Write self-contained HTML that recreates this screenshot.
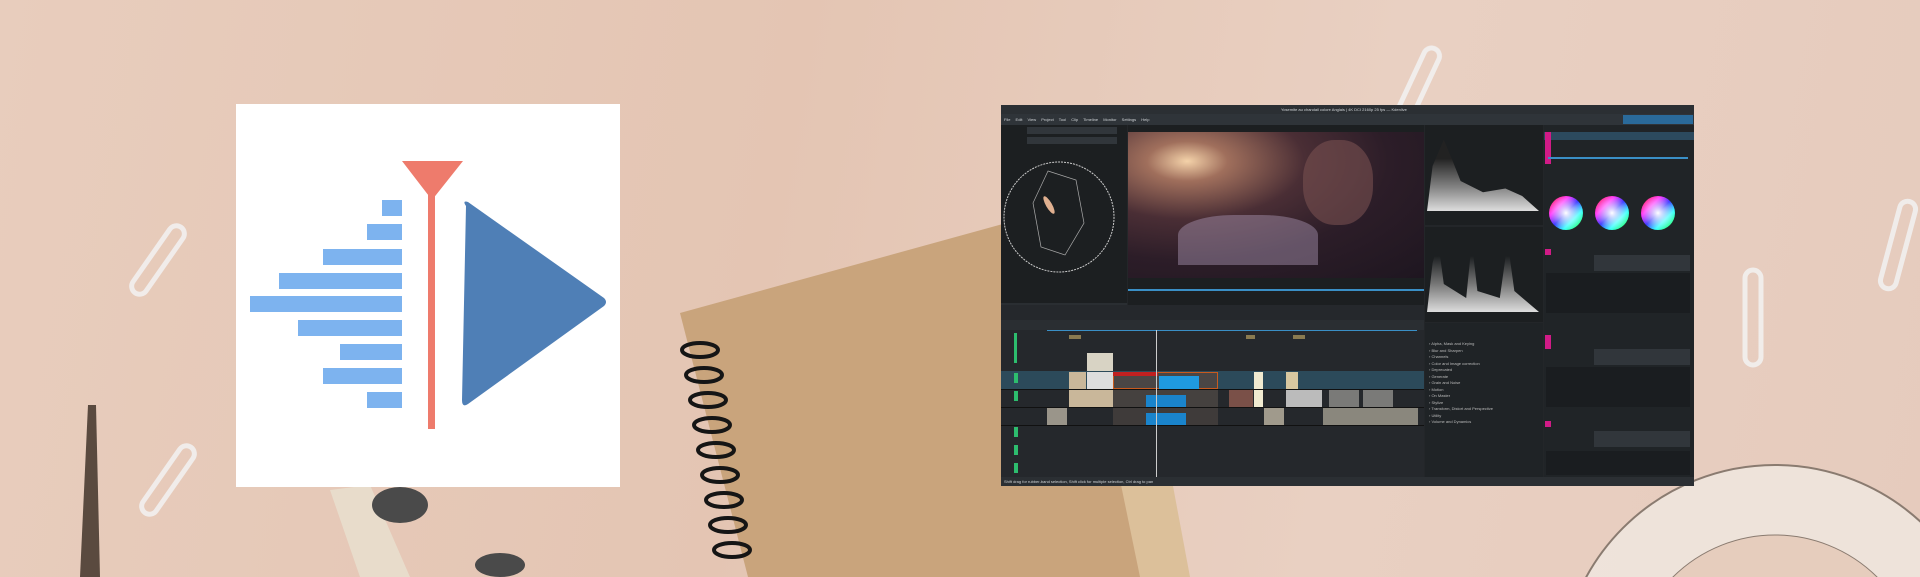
<!DOCTYPE html>
<html><head><meta charset="utf-8"><style>
*{margin:0;padding:0;box-sizing:border-box}
html,body{width:1920px;height:577px;overflow:hidden}
body{position:relative;font-family:"Liberation Sans",sans-serif;background:#e5c8b7}
.a{position:absolute}
.t{font-size:4px;color:#cfd3d6;white-space:nowrap}
</style></head><body>
<div class="a" style="left:0;top:0;width:1920px;height:577px;background:linear-gradient(100deg,#e8cdbd 0%,#e4c5b3 40%,#e9d0c2 70%,#e6cbbd 100%)"></div>
<svg class="a" style="left:0;top:0" width="1920" height="577">
<polygon points="680,313 1010,222 1160,577 748,577" fill="#c9a47c"/>
<polygon points="1120,480 1170,470 1190,577 1140,577" fill="#dcc09a"/>
<g fill="none" stroke="#151515" stroke-width="4">
<ellipse cx="700" cy="350" rx="18" ry="7"/><ellipse cx="704" cy="375" rx="18" ry="7"/><ellipse cx="708" cy="400" rx="18" ry="7"/><ellipse cx="712" cy="425" rx="18" ry="7"/><ellipse cx="716" cy="450" rx="18" ry="7"/><ellipse cx="720" cy="475" rx="18" ry="7"/><ellipse cx="724" cy="500" rx="18" ry="7"/><ellipse cx="728" cy="525" rx="18" ry="7"/><ellipse cx="732" cy="550" rx="18" ry="7"/>
</g>
<polygon points="88,405 96,405 100,577 80,577" fill="#5a4a3f"/>
<polygon points="330,490 370,485 410,577 360,577" fill="#e8dccb"/>
<ellipse cx="400" cy="505" rx="28" ry="18" fill="#4a4a4a"/>
<ellipse cx="500" cy="565" rx="25" ry="12" fill="#4a4a4a"/>
<circle cx="1775" cy="680" r="215" fill="rgba(240,232,225,.8)" stroke="#8a7b70" stroke-width="2"/>
<circle cx="1775" cy="680" r="145" fill="#e6cdbd" stroke="#8a7b70" stroke-width="1"/>
<g fill="none" stroke="#f2f2f2" stroke-width="5" opacity=".85">
<rect x="150" y="220" width="16" height="80" rx="8" transform="rotate(35 158 260)"/>
<rect x="160" y="440" width="16" height="80" rx="8" transform="rotate(35 168 480)"/>
<rect x="1410" y="45" width="16" height="80" rx="8" transform="rotate(25 1418 85)"/>
<rect x="1745" y="270" width="16" height="95" rx="8"/>
<rect x="1890" y="200" width="16" height="90" rx="8" transform="rotate(15 1898 245)"/>
</g>
</svg>
<div class="a" style="left:236px;top:104px;width:384px;height:383px;background:#fff"></div>
<svg class="a" style="left:0;top:0" width="1920" height="577">
<g fill="#7db3ef">
<rect x="382" y="200" width="20" height="16"/><rect x="367" y="224" width="35" height="16"/><rect x="323" y="249" width="79" height="16"/><rect x="279" y="273" width="123" height="16"/><rect x="250" y="296" width="152" height="16"/><rect x="298" y="320" width="104" height="16"/><rect x="340" y="344" width="62" height="16"/><rect x="323" y="368" width="79" height="16"/><rect x="367" y="392" width="35" height="16"/>
</g>
<rect x="428" y="161" width="7" height="268" fill="#ee7b6c"/>
<polygon points="402,161 463,161 432,200" fill="#ee7b6c"/>
<path d="M466,206 Q462,200 468,202 L604,298 Q608,302 604,306 L468,404 Q462,408 462,400 Z" fill="#4f7fb6"/>
</svg>
<div class="a" style="left:1001px;top:105px;width:693px;height:381px;background:#232629;overflow:hidden">
 <div class="a" style="left:0;top:0;width:693px;height:9px;background:#2b2f33"><span class="a t" style="left:280px;top:2px">Yosemite au chandail colore Anglais | 4K DCI 2160p 25 fps — Kdenlive</span></div>
 <div class="a" style="left:0;top:9px;width:693px;height:11px;background:#2f3439"><span class="a t" style="left:3px;top:3px;word-spacing:4px">File Edit View Project Tool Clip Timeline Monitor Settings Help</span>
  <div class="a" style="left:622px;top:1px;width:70px;height:9px;background:#2a6a9a"></div></div>
 <div class="a" style="left:0;top:20px;width:126px;height:178px;background:#1c1f21">
  <div class="a" style="left:26px;top:2px;width:90px;height:7px;background:#31363b"></div>
  <div class="a" style="left:26px;top:12px;width:90px;height:7px;background:#31363b"></div>
  <svg class="a" style="left:0;top:0" width="126" height="178"><circle cx="58" cy="92" r="55" fill="none" stroke="#ccc" stroke-width="1" stroke-dasharray="2 1"/><polygon points="47,46 75,55 83,98 64,130 40,122 32,78" fill="none" stroke="#aaa" stroke-width=".7"/><ellipse cx="48" cy="80" rx="3" ry="10" fill="#e0b090" transform="rotate(-30 48 80)"/></svg>
 </div>
 <div class="a" style="left:0;top:198px;width:126px;height:6px;background:#2a2e32"></div>
 <div class="a" style="left:127px;top:20px;width:296px;height:180px;background:#1c1f21">
  <div class="a" style="left:0;top:7px;width:296px;height:146px;background:radial-gradient(ellipse at 20% 20%,#f4d2a9 0%,#a06f5c 12%,#4a2e35 35%,#2c1d28 60%,#1e1620 100%)"></div>
  <div class="a" style="left:50px;top:90px;width:140px;height:50px;background:rgba(170,150,180,.45);border-radius:40% 40% 0 0"></div>
  <div class="a" style="left:175px;top:15px;width:70px;height:85px;background:rgba(120,80,80,.6);border-radius:45%"></div>
  <div class="a" style="left:0;top:164px;width:296px;height:2px;background:#3a8fc6"></div>
 </div>
 <div class="a" style="left:424px;top:20px;width:118px;height:100px;background:#1c1f21">
  <div class="a" style="left:2px;top:11px;width:112px;height:75px;background:linear-gradient(0deg,#ddd 0%,#888 30%,#222 70%);clip-path:polygon(0 100%,5% 40%,15% 5%,22% 30%,30% 60%,50% 75%,70% 70%,85% 80%,100% 100%)"></div>
 </div>
 <div class="a" style="left:424px;top:122px;width:118px;height:95px;background:#1c1f21">
  <div class="a" style="left:2px;top:15px;width:112px;height:70px;background:linear-gradient(0deg,#ddd 0%,#777 40%,#1c1f21 80%);clip-path:polygon(0 100%,5% 30%,10% 0,15% 60%,35% 80%,40% 0,45% 70%,65% 80%,72% 0,78% 70%,100% 100%)"></div>
 </div>
 <div class="a" style="left:424px;top:218px;width:118px;height:154px;background:#1f2326">
  <div class="a t" style="left:4px;top:18px;line-height:6.5px;font-size:4px;color:#bbb">› Alpha, Mask and Keying<br>› Blur and Sharpen<br>› Channels<br>› Color and Image correction<br>› Deprecated<br>› Generate<br>› Grain and Noise<br>› Motion<br>› On Master<br>› Stylize<br>› Transform, Distort and Perspective<br>› Utility<br>› Volume and Dynamics</div>
 </div>
 <div class="a" style="left:543px;top:20px;width:150px;height:352px;background:#202427">
  <div class="a" style="left:0;top:7px;width:150px;height:8px;background:#2c4a5e"></div>
  <div class="a" style="left:1px;top:7px;width:6px;height:32px;background:#d11b87"></div>
  <div class="a" style="left:4px;top:32px;width:140px;height:2px;background:#3a8fc6"></div>
  <svg class="a" style="left:0;top:68px" width="150" height="40">
   <defs><radialGradient id="w"><stop offset="0" stop-color="#fff"/><stop offset="1" stop-color="#fff" stop-opacity="0"/></radialGradient>
   <linearGradient id="c" x1="0" y1="0" x2="1" y2="1"><stop offset="0" stop-color="#f33"/><stop offset=".3" stop-color="#f3f"/><stop offset=".5" stop-color="#33f"/><stop offset=".7" stop-color="#3ff"/><stop offset="1" stop-color="#3f3"/></linearGradient></defs>
   <g><circle cx="22" cy="20" r="17" fill="url(#c)"/><circle cx="22" cy="20" r="17" fill="url(#w)"/><circle cx="68" cy="20" r="17" fill="url(#c)"/><circle cx="68" cy="20" r="17" fill="url(#w)"/><circle cx="114" cy="20" r="17" fill="url(#c)"/><circle cx="114" cy="20" r="17" fill="url(#w)"/></g>
  </svg>
  <div class="a" style="left:1px;top:124px;width:6px;height:6px;background:#d11b87"></div>
  <div class="a" style="left:50px;top:130px;width:96px;height:16px;background:#31363b"></div>
  <div class="a" style="left:2px;top:148px;width:144px;height:40px;background:#1a1d20"></div>
  <div class="a" style="left:1px;top:210px;width:6px;height:14px;background:#d11b87"></div>
  <div class="a" style="left:50px;top:224px;width:96px;height:16px;background:#31363b"></div>
  <div class="a" style="left:2px;top:242px;width:144px;height:40px;background:#1a1d20"></div>
  <div class="a" style="left:1px;top:296px;width:6px;height:6px;background:#d11b87"></div>
  <div class="a" style="left:50px;top:306px;width:96px;height:16px;background:#31363b"></div>
  <div class="a" style="left:2px;top:326px;width:144px;height:24px;background:#1a1d20"></div>
 </div>
 <div class="a" style="left:0;top:200px;width:423px;height:172px;background:#25282c">
  <div class="a" style="left:0;top:15px;width:423px;height:10px;background:#2a2e32"></div>
  <div class="a" style="left:46px;top:25px;width:370px;height:1px;background:#3a8fc6"></div>
  <div class="a" style="left:0;top:66px;width:423px;height:18px;background:#2c4a5a"></div>
  <div class="a" style="left:0;top:84px;width:423px;height:1px;background:#111"></div>
  <div class="a" style="left:0;top:102px;width:423px;height:1px;background:#111"></div>
  <div class="a" style="left:0;top:120px;width:423px;height:1px;background:#111"></div>
  <div class="a" style="left:13px;top:28px;width:3px;height:30px;background:#2dbd6e"></div>
  <div class="a" style="left:13px;top:68px;width:4px;height:10px;background:#2dbd6e"></div>
  <div class="a" style="left:13px;top:86px;width:4px;height:10px;background:#2dbd6e"></div>
  <div class="a" style="left:13px;top:122px;width:4px;height:10px;background:#2dbd6e"></div>
  <div class="a" style="left:13px;top:140px;width:4px;height:10px;background:#2dbd6e"></div>
  <div class="a" style="left:13px;top:158px;width:4px;height:10px;background:#2dbd6e"></div>
  <div class="a" style="left:68px;top:30px;width:12px;height:4px;background:#8a7a50"></div>
  <div class="a" style="left:245px;top:30px;width:9px;height:4px;background:#8a7a50"></div>
  <div class="a" style="left:292px;top:30px;width:12px;height:4px;background:#8a7a50"></div>
  <div class="a" style="left:86px;top:48px;width:26px;height:18px;background:#d8d3c4"></div>
  <div class="a" style="left:68px;top:67px;width:17px;height:17px;background:#c9b79a"></div>
  <div class="a" style="left:86px;top:67px;width:26px;height:17px;background:#ddd"></div>
  <div class="a" style="left:112px;top:67px;width:105px;height:17px;background:#4a4645;border:1px solid #c85a1e"></div>
  <div class="a" style="left:112px;top:67px;width:45px;height:4px;background:#c02020"></div>
  <div class="a" style="left:158px;top:71px;width:40px;height:13px;background:#1f9ae0"></div>
  <div class="a" style="left:253px;top:67px;width:9px;height:17px;background:#f0ead0"></div>
  <div class="a" style="left:285px;top:67px;width:12px;height:17px;background:#d8c8a0"></div>
  <div class="a" style="left:68px;top:85px;width:44px;height:17px;background:#c9b79a"></div>
  <div class="a" style="left:112px;top:85px;width:105px;height:17px;background:#45413f"></div>
  <div class="a" style="left:145px;top:90px;width:40px;height:12px;background:#1a84cc"></div>
  <div class="a" style="left:228px;top:85px;width:24px;height:17px;background:#7a5048"></div>
  <div class="a" style="left:253px;top:85px;width:9px;height:17px;background:#f0ead0"></div>
  <div class="a" style="left:285px;top:85px;width:36px;height:17px;background:#bbb"></div>
  <div class="a" style="left:328px;top:85px;width:30px;height:17px;background:#7a7a78"></div>
  <div class="a" style="left:362px;top:85px;width:30px;height:17px;background:#7a7a78"></div>
  <div class="a" style="left:46px;top:103px;width:20px;height:17px;background:#9a958a"></div>
  <div class="a" style="left:112px;top:103px;width:105px;height:17px;background:#3f3b3a"></div>
  <div class="a" style="left:145px;top:108px;width:40px;height:12px;background:#1a84cc"></div>
  <div class="a" style="left:263px;top:103px;width:20px;height:17px;background:#a09a8c"></div>
  <div class="a" style="left:322px;top:103px;width:95px;height:17px;background:#8a877d"></div>
  <div class="a" style="left:155px;top:25px;width:1px;height:147px;background:#ccc"></div>
 </div>
 <div class="a" style="left:0;top:372px;width:693px;height:9px;background:#2b2f33"><span class="a t" style="left:3px;top:2px">Shift drag for rubber-band selection, Shift click for multiple selection, Ctrl drag to pan</span></div>
</div>
</body></html>
